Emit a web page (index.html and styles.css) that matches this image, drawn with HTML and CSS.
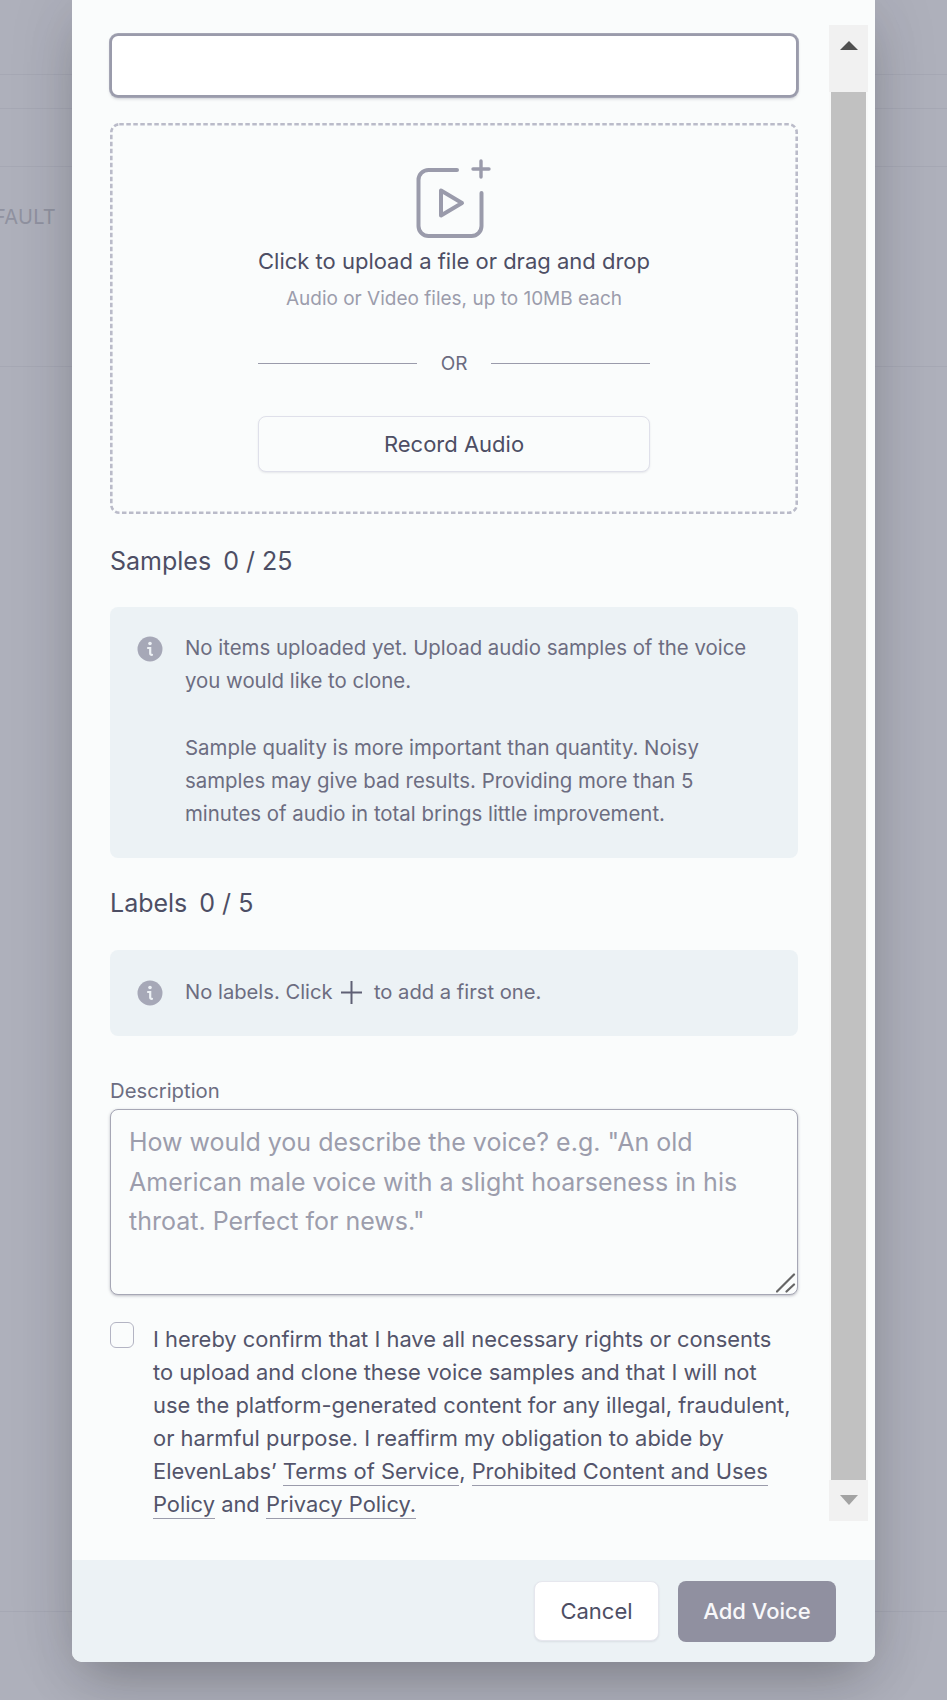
FILE: index.html
```html
<!DOCTYPE html>
<html lang="en">
<head>
<meta charset="utf-8">
<title>Add Voice</title>
<link rel="stylesheet" href="styles.css">
</head>
<body>
<div class="backdrop">
  <div class="row row-a"></div>
  <div class="row row-b"></div>
  <div class="row row-c"></div>
  <div class="row row-d"><span class="row-label">FAULT</span></div>
  <div class="row row-e"></div>
</div>
<section class="modal">
  <div class="modal-main">
    <form class="form">
      <input class="name-input" type="text" aria-label="Name">
      <div class="dropzone">
        <svg class="drop-border" width="688" height="391" viewBox="0 0 688 391" fill="none"><rect x="1.300" y="1.300" width="685.400" height="388.400" rx="8" stroke="#babbc9" stroke-width="2.600" stroke-dasharray="4.500 2.500"/></svg>
        <svg class="upload-icon" width="80" height="84" viewBox="0 0 80 84" fill="none" stroke="#9a9bab" stroke-width="4" stroke-linecap="round" stroke-linejoin="round">
          <path d="M43 13H14.500C9 13 4.500 17.500 4.500 23V69C4.500 74.500 9 79 14.500 79H57.500C63 79 67.500 74.500 67.500 69V36"/>
          <path d="M67 4V20M59 12H75" stroke-width="3.400"/>
          <path d="M27 33.500V58.500L48 46Z"/>
        </svg>
        <p class="drop-title">Click to upload a file or drag and drop</p>
        <p class="drop-sub">Audio or Video files, up to 10MB each</p>
        <div class="or-row"><span class="or-line"></span><span class="or-text">OR</span><span class="or-line"></span></div>
        <button class="record-btn" type="button">Record Audio</button>
      </div>
      <h2 class="section-title samples-title"><span>Samples</span><span>0 / 25</span></h2>
      <div class="info info-samples">
        <svg class="info-icon" width="26" height="26" viewBox="0 0 26 26"><circle cx="13" cy="13" r="12.500" fill="#a6a8b7"/><circle cx="13" cy="7.500" r="1.800" fill="#edf1f5"/><path d="M11 12H13.200V17.500Q13.200 18.800 15 18.800" fill="none" stroke="#edf1f5" stroke-width="2.200" stroke-linecap="round"/></svg>
        <div class="info-text">
          <p>No items uploaded yet. Upload audio samples of the voice you would like to clone.</p>
          <p>Sample quality is more important than quantity. Noisy samples may give bad results. Providing more than 5 minutes of audio in total brings little improvement.</p>
        </div>
      </div>
      <h2 class="section-title labels-title"><span>Labels</span><span>0 / 5</span></h2>
      <div class="info info-labels">
        <svg class="info-icon-center" width="26" height="26" viewBox="0 0 26 26"><circle cx="13" cy="13" r="12.500" fill="#a6a8b7"/><circle cx="13" cy="7.500" r="1.800" fill="#edf1f5"/><path d="M11 12H13.200V17.500Q13.200 18.800 15 18.800" fill="none" stroke="#edf1f5" stroke-width="2.200" stroke-linecap="round"/></svg>
        <p class="info-line">No labels. Click <svg class="plus" width="21" height="23" viewBox="0 0 21 23" fill="none" stroke="#5f6075" stroke-width="2"><path d="M0 11.500H21M10.500 0V23"/></svg> to add a first one.</p>
      </div>
      <label class="field-label" for="desc">Description</label>
      <div class="desc-wrap">
        <textarea class="desc" id="desc" placeholder="How would you describe the voice? e.g. &quot;An old American male voice with a slight hoarseness in his throat. Perfect for news.&quot;"></textarea>
        <svg class="resizer" width="20" height="20" viewBox="0 0 20 20" fill="none" stroke="#666" stroke-width="2.200" stroke-linecap="round" aria-hidden="true"><path d="M1 18.500L18 1.500M10.500 18.500L18 11.500"/></svg>
      </div>
      <div class="consent">
        <input class="check" type="checkbox" aria-label="Confirm">
        <p class="consent-text">I hereby confirm that I have all necessary rights or consents to upload and clone these voice samples and that I will not use the platform-generated content for any illegal, fraudulent, or harmful purpose. I reaffirm my obligation to abide by ElevenLabs’ <a href="#">Terms of Service</a>, <a href="#">Prohibited Content and Uses Policy</a> and <a href="#">Privacy Policy.</a></p>
      </div>
    </form>
    <div class="scrollbar" aria-hidden="true">
      <div class="sb-btn sb-up"><svg width="18" height="9" viewBox="0 0 18 9"><path d="M9 0L18 9H0Z" fill="#505050"/></svg></div>
      <div class="sb-thumb"></div>
      <div class="sb-btn sb-down"><svg width="18" height="10" viewBox="0 0 18 10"><path d="M0 0H18L9 10Z" fill="#a3a3a3"/></svg></div>
    </div>
  </div>
  <footer class="modal-footer">
    <button class="btn btn-cancel" type="button">Cancel</button>
    <button class="btn btn-add" type="button">Add Voice</button>
  </footer>
</section>
</body>
</html>
```
FILE: styles.css
```css
* { box-sizing: border-box; }
html, body { margin: 0; padding: 0; }
body {
  width: 947px;
  height: 1700px;
  overflow: hidden;
  position: relative;
  background: #aeb0bb;
  font-family: Inter, "Liberation Sans", sans-serif;
}
p, h2 { margin: 0; }

.backdrop { display: flex; flex-direction: column; height: 1700px; }
.row { border-bottom: 1px solid #a6a8b4; flex: none; }
.row-a { height: 75px; }
.row-b { height: 34px; }
.row-c { height: 58px; }
.row-d { height: 200px; padding-top: 38px; overflow: hidden; }
.row-label { display: block; margin-left: -6px; font-size: 20px; line-height: 24px; color: #9092a0; letter-spacing: .3px; }
.row-e { height: 1245px; }

.modal {
  position: absolute;
  left: 72px;
  top: 0;
  width: 803px;
  height: 1662px;
  display: flex;
  flex-direction: column;
  background: #fafcfc;
  border-radius: 0 0 10px 10px;
  overflow: hidden;
  box-shadow: 0 25px 50px -12px rgba(0,0,0,.25), 0 0 70px rgba(50,50,70,.1);
}
.modal-main { display: flex; height: 1560px; flex: none; }
.form { width: 726px; padding: 34px 0 0 38px; flex: none; display: flex; flex-direction: column; }

.name-input {
  height: 63px;
  width: 688px;
  flex: none;
  background: #fff;
  border: 2px solid #9a9bab;
  border-radius: 8px;
  box-shadow: 0 0 0 1px #a4a5b4, 0 2px 3px rgba(80,80,100,.25);
  outline: 0;
}

.dropzone {
  position: relative;
  margin-top: 26px;
  height: 391px;
  flex: none;
  display: flex;
  flex-direction: column;
  align-items: center;
  padding-top: 34px;
}
.drop-border { position: absolute; left: 0; top: 0; display: block; }
.upload-icon { display: block; flex: none; }
.drop-title { margin-top: 5px; font-size: 22px; line-height: 30px; color: #4d4e64; white-space: nowrap; }
.drop-sub { margin-top: 10px; font-size: 19px; line-height: 26px; color: #9c9dac; white-space: nowrap; }
.or-row { margin-top: 38px; width: 392px; display: flex; align-items: center; gap: 24px; height: 26px; }
.or-line { flex: 1; height: 1px; background: #9a9bab; }
.or-text { font-size: 19px; line-height: 26px; color: #6a6b7f; margin-top: 2px; }
.record-btn {
  margin-top: 40px;
  width: 392px;
  height: 56px;
  background: #fafcfc;
  border: 1px solid #dfe0ea;
  border-radius: 8px;
  box-shadow: 0 1px 2px rgba(80,80,110,.12);
  font-family: inherit;
  font-size: 22px;
  color: #4d4e64;
  padding: 0;
}

.section-title { display: flex; gap: 12px; font-weight: 400; font-size: 25px; line-height: 33px; color: #4d4e64; flex: none; }
.samples-title { margin-top: 31px; }
.labels-title { margin-top: 29px; }

.info { background: #ecf2f5; border-radius: 8px; display: flex; flex: none; width: 688px; }
.info-samples { margin-top: 29px; height: 251px; padding: 24px 28px 28px 27px; gap: 22px; }
.info-icon { flex: none; margin-top: 5px; display: block; }
.info-icon-center { flex: none; display: block; }
.info-text { font-size: 20.400px; line-height: 33.200px; color: #6c6d81; }
.info-text p + p { margin-top: 33.200px; }
.info-labels { margin-top: 30px; height: 86px; padding: 0 28px 0 27px; gap: 22px; align-items: center; }
.info-line { font-size: 20.200px; line-height: 33px; color: #6c6d81; white-space: nowrap; margin-top: -4px; }
.plus { vertical-align: -5px; margin: 0 6px 0 3px; }

.field-label { display: block; margin-top: 41px; font-size: 20.300px; line-height: 28px; color: #6c6d81; flex: none; }
.desc-wrap { position: relative; margin-top: 4px; width: 688px; height: 186px; flex: none; }
.desc {
  width: 100%;
  height: 100%;
  display: block;
  background: #fafcfc;
  border: 1px solid #a6a7b5;
  border-radius: 8px;
  box-shadow: 0 1px 3px rgba(70,70,90,.35);
  padding: 13px 18px;
  font-family: inherit;
  font-size: 25px;
  line-height: 39.500px;
  color: #4d4e64;
  resize: none;
  outline: 0;
}
.desc::placeholder { color: #9c9dac; opacity: 1; }
.resizer { position: absolute; right: 2px; bottom: 2px; display: block; }

.consent { margin-top: 27px; display: flex; gap: 19px; align-items: flex-start; width: 688px; flex: none; }
.check {
  appearance: none;
  -webkit-appearance: none;
  margin: 0;
  flex: none;
  width: 24px;
  height: 26px;
  background: #fafcfc;
  border: 1px solid #b3b4c3;
  border-radius: 6px;
}
.consent-text { padding: 1px 3px 0 0; font-size: 21.900px; line-height: 33px; color: #53546a; }
.consent-text a { color: inherit; text-decoration: none; border-bottom: 1px solid #9a9bab; padding-bottom: 1px; }

.scrollbar { margin: 25px 0 0 31px; width: 39px; height: 1496px; display: flex; flex-direction: column; background: #f8f9f9; flex: none; align-items: center; }
.sb-btn { width: 39px; background: #f1f1f1; flex: none; display: flex; justify-content: center; }
.sb-up { height: 67px; padding-top: 16px; }
.sb-up svg { display: block; margin-left: 1px; }
.sb-thumb { width: 35px; height: 1388px; background: #c1c1c1; flex: none; }
.sb-down { height: 41px; padding-top: 15px; }
.sb-down svg { display: block; }

.modal-footer {
  flex: 1;
  background: #ecf2f5;
  display: flex;
  justify-content: flex-end;
  align-items: center;
  gap: 19px;
  padding: 0 39px 0 0;
}
.btn { font-family: inherit; font-size: 22px; border-radius: 8px; height: 60px; padding: 0; }
.btn-cancel { width: 125px; background: #fff; color: #4d4e64; border: 1px solid #e6e7ee; box-shadow: 0 1px 2px rgba(80,80,110,.12); }
.btn-add { width: 158px; height: 61px; background: #9090a0; color: #f8f8fa; border: 0; font-weight: 500; }
```
